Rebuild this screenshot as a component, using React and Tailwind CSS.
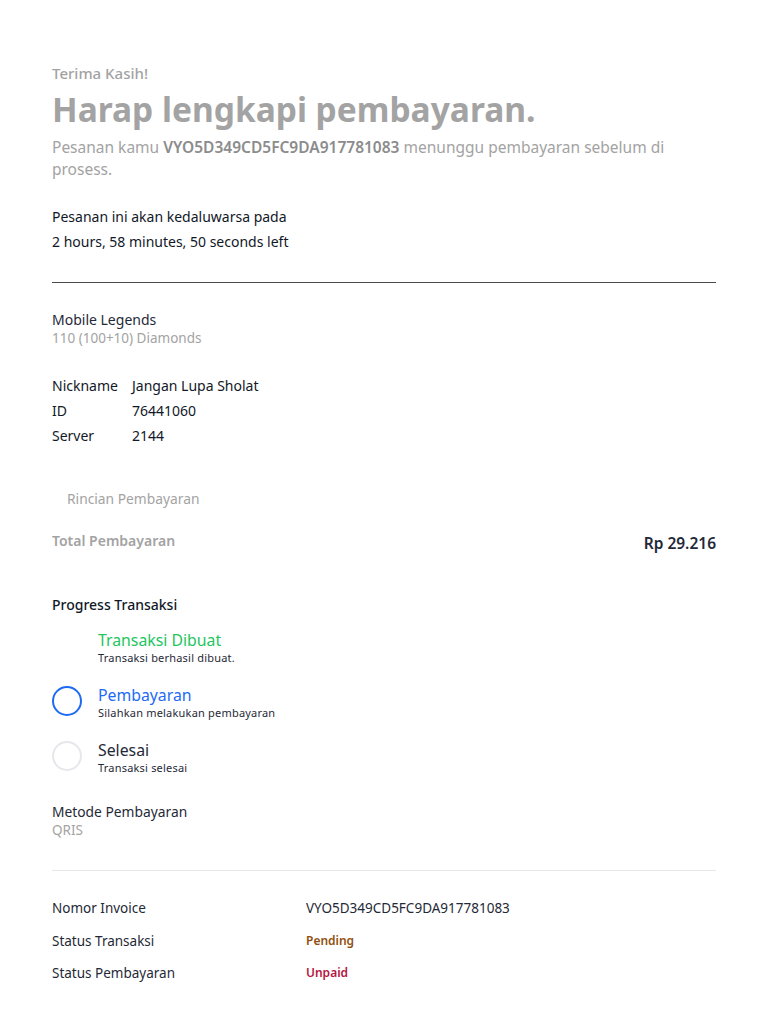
export default function App() {
  return (
    <div className="min-h-[1024px] bg-white px-[52px] pt-[62px] text-[#1f2937]" style={{ fontFamily: '"Noto Sans", sans-serif' }}>
      <p className="text-[15px] font-medium leading-[22px] text-[#a3a3a3]">Terima Kasih!</p>
      <h1 className="mt-[3px] text-[33.5px] font-bold leading-[44px] text-[#a3a3a3]">Harap lengkapi pembayaran.</h1>
      <p className="mt-[5px] text-[15.5px] leading-[22px] text-[#a3a3a3]">
        Pesanan kamu <span className="font-semibold text-[#8c8c8c]">VYO5D349CD5FC9DA917781083</span> menunggu pembayaran sebelum di prosess.
      </p>
      <div className="mt-[24px] text-[14px] leading-[25px] text-[#111827]">
        <p>Pesanan ini akan kedaluwarsa pada</p>
        <p>2 hours, 58 minutes, 50 seconds left</p>
      </div>
      <hr className="mt-[28px] border-t border-[#4b4b4b]" />

      <div className="mt-[28px] text-[14px] leading-[18px]">
        <p className="text-[#1f2937]">Mobile Legends</p>
        <p className="text-[13.5px] text-[#a3a3a3]">110 (100+10) Diamonds</p>
      </div>

      <div className="mt-[26px] grid grid-cols-[80px_1fr] text-[14px] leading-[25px] text-[#111827]">
        <span>Nickname</span><span>Jangan Lupa Sholat</span>
        <span>ID</span><span>76441060</span>
        <span>Server</span><span>2144</span>
      </div>

      <p className="mt-[38px] pl-[15px] text-[13.8px] leading-[25px] text-[#a3a3a3]">Rincian Pembayaran</p>
      <div className="mt-[20px] flex items-start justify-between">
        <span className="text-[14px] font-semibold leading-[20px] text-[#a3a3a3]">Total Pembayaran</span>
        <span className="mt-[1px] text-[15.5px] font-semibold leading-[22px] text-[#1f2937]">Rp 29.216</span>
      </div>

      <p className="mt-[41px] text-[14px] font-medium leading-[20px] text-[#111827]">Progress Transaksi</p>

      <div className="mt-[15px] flex flex-col gap-[19px]">
        <div className="flex items-center gap-[16px]">
          <div className="h-[30px] w-[30px] shrink-0" />
          <div>
            <p className="text-[15.8px] leading-[20px] text-[#22c55e]">Transaksi Dibuat</p>
            <p className="text-[11px] leading-[16px] tracking-[0.2px] text-[#1f2937]">Transaksi berhasil dibuat.</p>
          </div>
        </div>
        <div className="flex items-center gap-[16px]">
          <div className="-mt-[4px] h-[30px] w-[30px] shrink-0 rounded-full border-2 border-[#1d6bf5]" />
          <div>
            <p className="text-[15.8px] leading-[20px] text-[#1d6bf5]">Pembayaran</p>
            <p className="text-[11px] leading-[16px] tracking-[0.2px] text-[#1f2937]">Silahkan melakukan pembayaran</p>
          </div>
        </div>
        <div className="flex items-center gap-[16px]">
          <div className="-mt-[4px] h-[30px] w-[30px] shrink-0 rounded-full border-2 border-[#e5e7eb]" />
          <div>
            <p className="text-[15.8px] leading-[20px] text-[#1f2937]">Selesai</p>
            <p className="text-[11px] leading-[16px] tracking-[0.2px] text-[#1f2937]">Transaksi selesai</p>
          </div>
        </div>
      </div>

      <div className="mt-[26px] text-[14px] leading-[19px]">
        <p className="text-[13.8px] text-[#1f2937]">Metode Pembayaran</p>
        <p className="text-[13.5px] text-[#a3a3a3]">QRIS</p>
      </div>

      <hr className="mt-[30px] border-t border-[#e5e7eb]" />

      <div className="mt-[27px] grid grid-cols-[254px_1fr] items-center gap-y-[12.5px] text-[13.5px] leading-[20px] text-[#1f2937]">
        <span>Nomor Invoice</span><span>VYO5D349CD5FC9DA917781083</span>
        <span>Status Transaksi</span><span className="text-[12px] font-semibold text-[#92500f]">Pending</span>
        <span>Status Pembayaran</span><span className="text-[12px] font-semibold text-[#b5153f]">Unpaid</span>
      </div>
    </div>
  );
}
